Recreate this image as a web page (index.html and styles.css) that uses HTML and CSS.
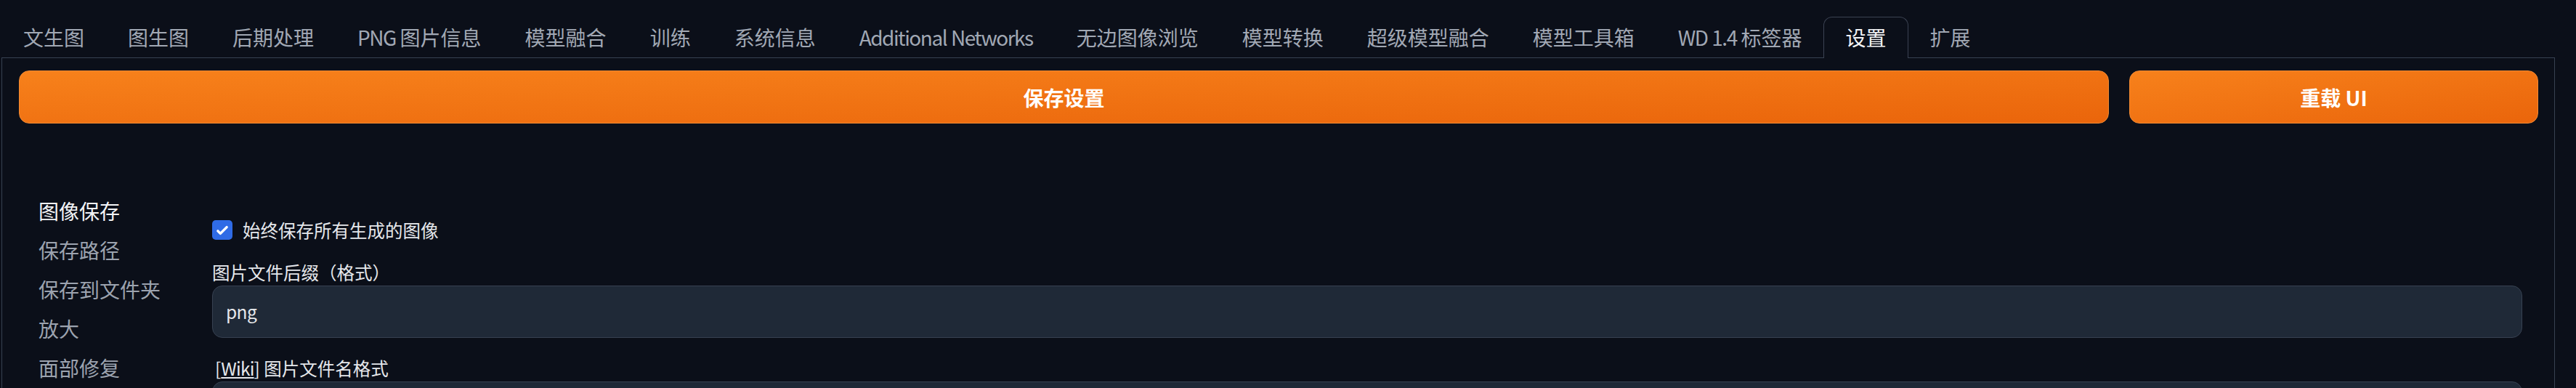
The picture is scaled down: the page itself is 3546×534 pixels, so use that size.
FILE: index.html
```html
<!DOCTYPE html>
<html lang="zh-CN">
<head>
<meta charset="utf-8">
<title>设置</title>
<link rel="stylesheet" href="styles.css">
</head>
<body>
<div class="app">
  <nav class="tabs">
    <div class="tab">文生图</div>
    <div class="tab">图生图</div>
    <div class="tab">后期处理</div>
    <div class="tab"><span class="latin">PNG </span>图片信息</div>
    <div class="tab">模型融合</div>
    <div class="tab">训练</div>
    <div class="tab">系统信息</div>
    <div class="tab"><span class="latin">Additional Networks</span></div>
    <div class="tab">无边图像浏览</div>
    <div class="tab">模型转换</div>
    <div class="tab">超级模型融合</div>
    <div class="tab">模型工具箱</div>
    <div class="tab"><span class="latin">WD 1.4 </span>标签器</div>
    <div class="tab selected">设置</div>
    <div class="tab">扩展</div>
  </nav>
  <section class="panel">
    <div class="actions">
      <button class="btn btn-save">保存设置</button>
      <button class="btn btn-reload">重载 UI</button>
    </div>
    <div class="settings">
      <ul class="sidebar">
        <li class="active">图像保存</li>
        <li>保存路径</li>
        <li>保存到文件夹</li>
        <li>放大</li>
        <li>面部修复</li>
      </ul>
      <div class="content">
        <label class="check-row">
          <span class="checkbox">
            <svg viewBox="0 0 16 16" width="28" height="28"><path fill="#fff" d="M12.207 4.793a1 1 0 010 1.414l-5 5a1 1 0 01-1.414 0l-2-2a1 1 0 011.414-1.414L6.5 9.086l4.293-4.293a1 1 0 011.414 0z"/></svg>
          </span>
          <span>始终保存所有生成的图像</span>
        </label>
        <div class="field">
          <div class="field-label">图片文件后缀（格式）</div>
          <div class="input"><span class="latin-sm">png</span></div>
        </div>
        <div class="field">
          <div class="field-label wiki-label">[<a class="wiki" href="#">Wiki</a>] 图片文件名格式</div>
          <div class="input"></div>
        </div>
      </div>
    </div>
  </section>
</div>
</body>
</html>
```
FILE: styles.css
```css
html, body {
  margin: 0;
  padding: 0;
  background: #0b0f19;
}
body {
  font-family: "Noto Sans CJK SC", "Noto Sans", sans-serif;
  color: #e5e7eb;
  overflow: hidden;
}
.app {
  padding: 0 29px 0 2px;
}
.tabs {
  display: flex;
  align-items: flex-end;
  padding-top: 23px;
  border-bottom: 1px solid #374151;
}
.tab {
  box-sizing: border-box;
  height: 57px;
  margin-bottom: -1px;
  padding: 0 29px;
  border: 1px solid transparent;
  border-bottom: 0;
  border-radius: 12px 12px 0 0;
  font-size: 28px;
  line-height: 55px;
  color: #a1a8b4;
  white-space: nowrap;
}
.tab .latin {
  letter-spacing: -1.5px;
  word-spacing: 1px;
}
.tab.selected {
  border-color: #3b4252;
  background: #0b0f19;
  color: #f3f4f6;
}
.panel {
  border: 1px solid #374151;
  border-top: 0;
  padding: 17px 22px 0 23px;
  height: 600px;
}
.actions {
  display: flex;
  gap: 28px;
}
.btn {
  height: 73px;
  border: 1px solid #f08a34;
  border-radius: 14px;
  background: linear-gradient(to bottom right, #f7811b, #ea650b);
  color: #ffffff;
  font-family: inherit;
  font-size: 28px;
  font-weight: 700;
  cursor: pointer;
}
.btn-save {
  flex: 1;
}
.btn-reload {
  width: 563px;
}
.settings {
  display: flex;
  margin-top: 93px;
}
.sidebar {
  list-style: none;
  margin: 0;
  padding: 0 0 0 27px;
  width: 239px;
  flex: none;
}
.sidebar li {
  font-size: 28px;
  line-height: 54px;
  color: #9ca3af;
  white-space: nowrap;
}
.sidebar li.active {
  color: #f3f4f6;
}
.content {
  flex: 1;
  padding: 40px 22px 0 0;
}
.check-row {
  display: flex;
  align-items: center;
  gap: 14px;
  height: 27px;
  font-size: 24.5px;
  color: #e5e7eb;
}
.checkbox {
  display: flex;
  align-items: center;
  justify-content: center;
  width: 28px;
  height: 27px;
  border-radius: 5px;
  background: #2f6be6;
}
.field {
  margin-top: 28px;
}
.field + .field {
  margin-top: 25px;
}
.field-label {
  font-size: 24.5px;
  line-height: 34px;
  color: #e5e7eb;
  margin-bottom: 1px;
}
.wiki-label {
  padding-left: 4px;
}
.wiki {
  color: #e5e7eb;
  text-decoration: underline;
  letter-spacing: -0.8px;
}
.latin-sm {
  letter-spacing: -0.6px;
}
.input {
  box-sizing: border-box;
  height: 72px;
  padding: 0 18px;
  border: 1px solid #374151;
  border-radius: 14px;
  background: #1f2937;
  font-size: 24.5px;
  line-height: 70px;
  color: #e5e7eb;
}
```
